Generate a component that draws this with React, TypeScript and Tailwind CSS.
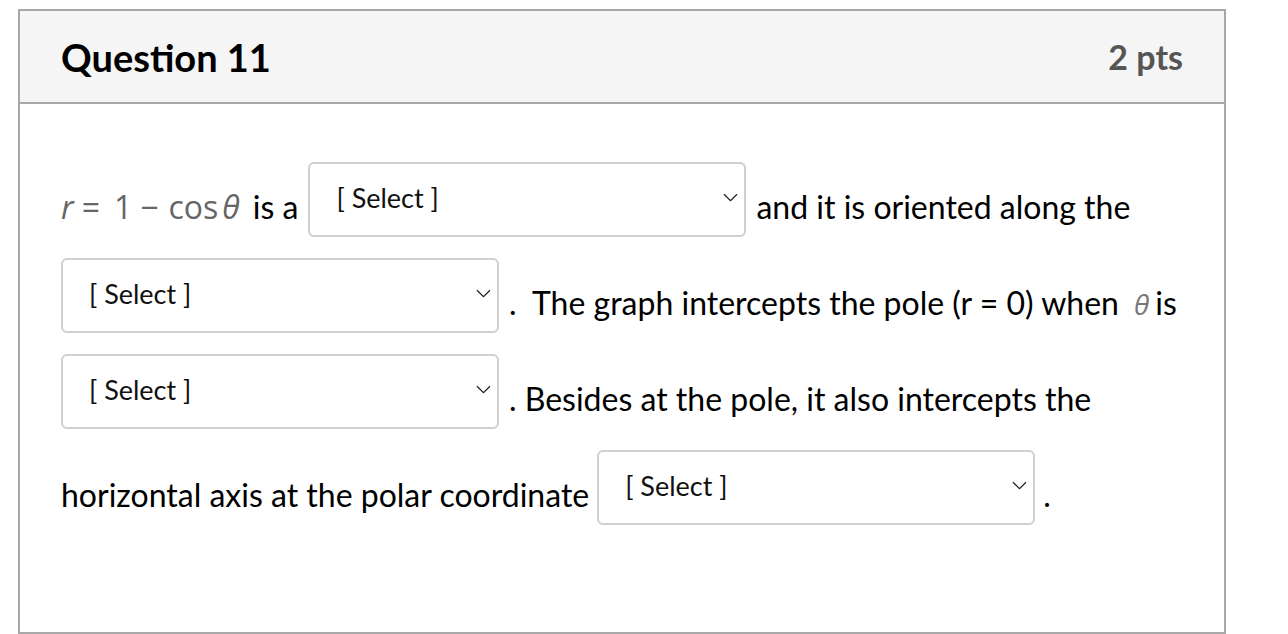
function Chevron() {
  return (
    <svg width="15" height="9" viewBox="0 0 15 9" fill="none" className="-mt-[4px]">
      <path d="M1 1.2 L7.5 7.6 L14 1.2" stroke="#222" strokeWidth="1.3" />
    </svg>
  );
}

function Select({ className = '' }: { className?: string }) {
  return (
    <div
      className={`flex h-[75px] w-[438px] shrink-0 items-center justify-between rounded-[6px] border-2 border-[#cfcfcf] bg-white pl-[26px] pr-[6px] ${className}`}
    >
      <span className="-mt-[4px] text-[27px] text-[#111]">[ Select ]</span>
      <Chevron />
    </div>
  );
}

function Theta() {
  return <span className="italic">θ</span>;
}

export default function App() {
  return (
    <div className="min-h-screen bg-white pt-[9px] pl-[18px] font-['Lato','Liberation_Sans',sans-serif] text-black">
      <div className="h-[625px] w-[1208px] border-2 border-[#a8a8a8]">
        <div className="flex h-[93px] items-center justify-between border-b-2 border-[#a8a8a8] bg-[#f5f5f5] px-[41px]">
          <h2 className="text-[38px] font-bold leading-none">Question 11</h2>
          <span className="text-[34px] font-bold leading-none text-[#555]">2 pts</span>
        </div>

        <div className="flex flex-col gap-[21px] px-[41px] pt-[58px] text-[32px] leading-none">
          <div className="flex items-center">
            <span className="mt-[14px] flex items-baseline font-['Open_Sans','DejaVu_Sans',sans-serif] text-[32px] text-[#666]">
              <span className="italic">r</span>
              <span className="ml-[8px]">=</span>
              <span className="ml-[14px]">1</span>
              <span className="ml-[8px]">−</span>
              <span className="ml-[10px]">cos</span>
              <span className="ml-[4px]">
                <Theta />
              </span>
            </span>
            <span className="ml-[13px] mt-[14px]">is a</span>
            <Select className="ml-[10px]" />
            <span className="ml-[10px] mt-[14px]">and it is oriented along the</span>
          </div>

          <div className="flex items-center">
            <Select />
            <span className="ml-[10px] mt-[14px] flex items-baseline whitespace-pre">
              <span>.  The graph intercepts the pole (r = 0) when</span>
              <span className="ml-[15px] font-['Open_Sans','DejaVu_Sans',sans-serif] text-[28px] text-[#777]">
                <Theta />
              </span>
              <span className="ml-[6px]">is</span>
            </span>
          </div>

          <div className="flex items-center">
            <Select />
            <span className="ml-[10px] mt-[14px]">. Besides at the pole, it also intercepts the</span>
          </div>

          <div className="flex items-center">
            <span className="mt-[14px]">horizontal axis at the polar coordinate</span>
            <Select className="ml-[8px]" />
            <span className="ml-[8px] mt-[14px]">.</span>
          </div>
        </div>
      </div>
    </div>
  );
}
